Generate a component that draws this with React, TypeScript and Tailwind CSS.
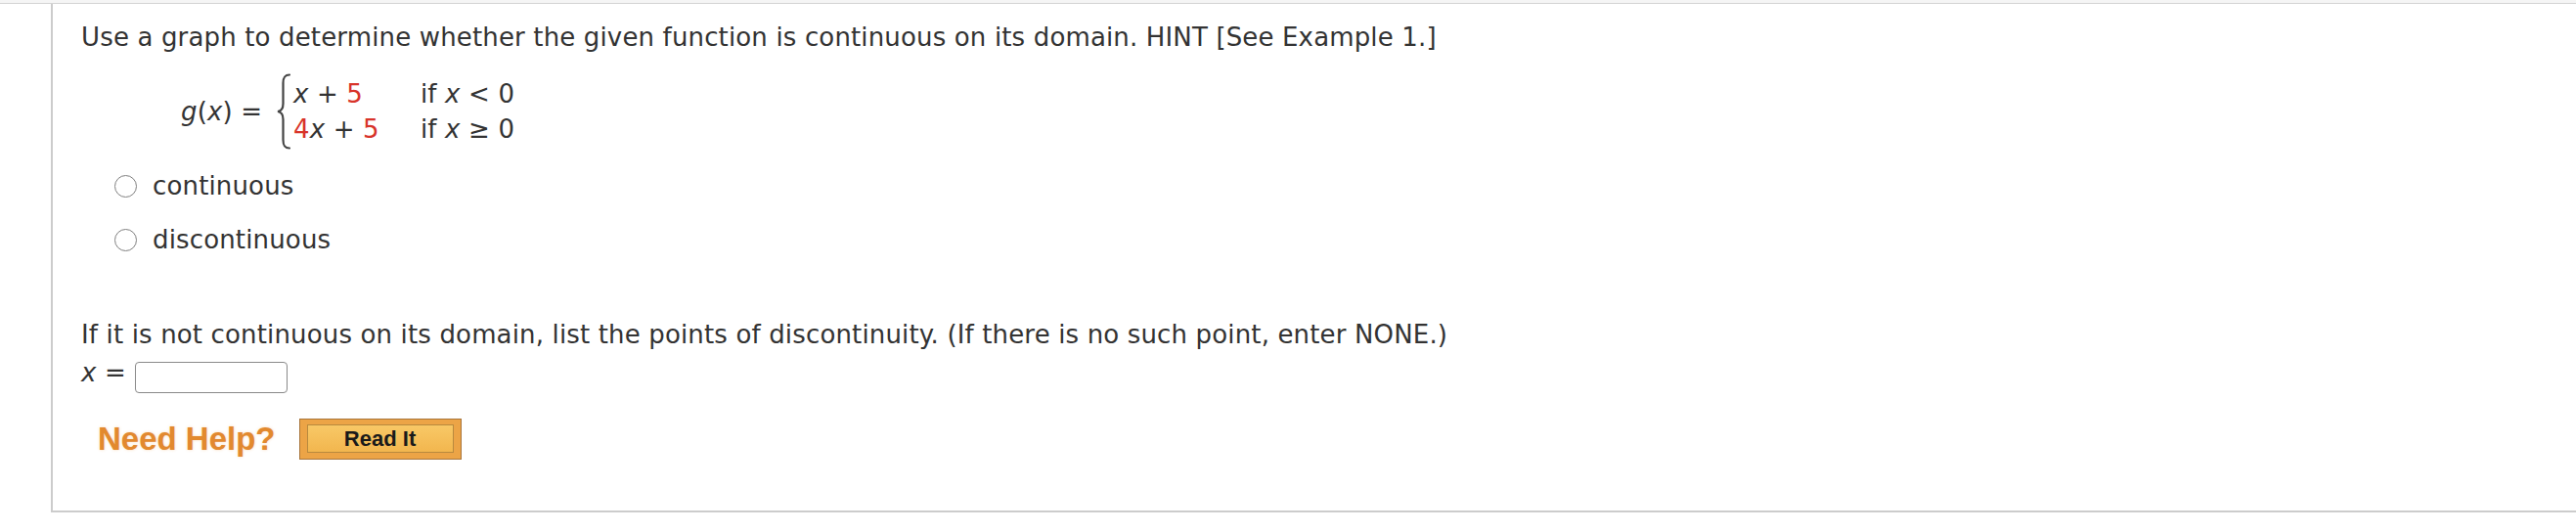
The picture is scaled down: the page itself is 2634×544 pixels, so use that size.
import React from 'react';

const red = 'text-[#d8342a]';

function Brace() {
  return (
    <svg width="16" height="78" viewBox="0 0 16 78" className="shrink-0">
      <path
        d="M14 1.5 C9 1.5 7.5 4 7.5 10 L7.5 31 C7.5 36 5.5 38.5 2 39 C5.5 39.5 7.5 42 7.5 47 L7.5 68 C7.5 74 9 76.5 14 76.5"
        fill="none"
        stroke="#444"
        strokeWidth="2.2"
        strokeLinecap="round"
      />
    </svg>
  );
}

function Radio({ label }: { label: string }) {
  return (
    <label className="flex items-center ml-[34px] leading-[36px]">
      <span className="w-[23px] h-[23px] rounded-full border-[1.5px] border-[#7f7f7f] bg-white shrink-0" />
      <span className="ml-[16px]">{label}</span>
    </label>
  );
}

export default function App() {
  return (
    <div className="w-full h-[544px] bg-white text-[#333] text-[26px] tracking-[0.15px] font-['DejaVu_Sans',Verdana,sans-serif]">
      {/* top strip */}
      <div className="h-[4px] bg-[#f5f5f5] border-b border-[#d4d4d4]" />

      <div className="ml-[52px] border-l-2 border-b-2 border-[#cccccc] pl-[29px] pt-[16px] pb-[52px]">
        <p className="leading-[36px]">
          Use a graph to determine whether the given function is continuous on its domain. HINT [See Example 1.]
        </p>

        {/* piecewise function */}
        <div className="mt-[19px] ml-[102px] flex items-center">
          <span className="w-[97px] leading-[36px] whitespace-nowrap">
            <i>g</i>(<i>x</i>) =
          </span>
          <Brace />
          <div className="ml-[2px] grid grid-cols-[130px_auto] leading-[36px] whitespace-nowrap">
            <span>
              <i>x</i> + <span className={red}>5</span>
            </span>
            <span>
              if <i>x</i> &lt; 0
            </span>
            <span>
              <span className={red}>4</span>
              <i>x</i> + <span className={red}>5</span>
            </span>
            <span>
              if <i>x</i> ≥ 0
            </span>
          </div>
        </div>

        {/* choices */}
        <div className="mt-[19px] flex flex-col gap-[19px]">
          <Radio label="continuous" />
          <Radio label="discontinuous" />
        </div>

        <p className="mt-[61px] leading-[36px]">
          If it is not continuous on its domain, list the points of discontinuity. (If there is no such point, enter NONE.)
        </p>

        <div className="mt-[8px] flex items-start">
          <span className="w-[55px] leading-[26px] whitespace-nowrap">
            <i>x</i> =
          </span>
          <div className="mt-[2px] w-[156px] h-[32px] border-[1.5px] border-[#8a8a8a] rounded-[4px] bg-white" />
        </div>

        {/* help */}
        <div className="mt-[26px] ml-[17px] flex items-start">
          <span className="leading-[42px] text-[33px] tracking-normal font-bold text-[#e2892f] font-['Liberation_Sans',Arial,sans-serif] [text-shadow:0_0_3px_rgba(240,170,100,0.45)]">
            Need Help?
          </span>
          <button
            type="button"
            className="ml-[24px] w-[166px] h-[42px] border border-[#a8743a] bg-[#eca446] px-[7px] pt-[5px] pb-[6px]"
          >
            <div className="h-full border border-[#b88a3e] bg-gradient-to-b from-[#f8c866] to-[#f2b64e] flex items-center justify-center">
              <span className="text-[22px] tracking-normal font-bold text-[#1a1a1a] leading-none font-['Liberation_Sans',Arial,sans-serif]">
                Read It
              </span>
            </div>
          </button>
        </div>
      </div>
    </div>
  );
}
